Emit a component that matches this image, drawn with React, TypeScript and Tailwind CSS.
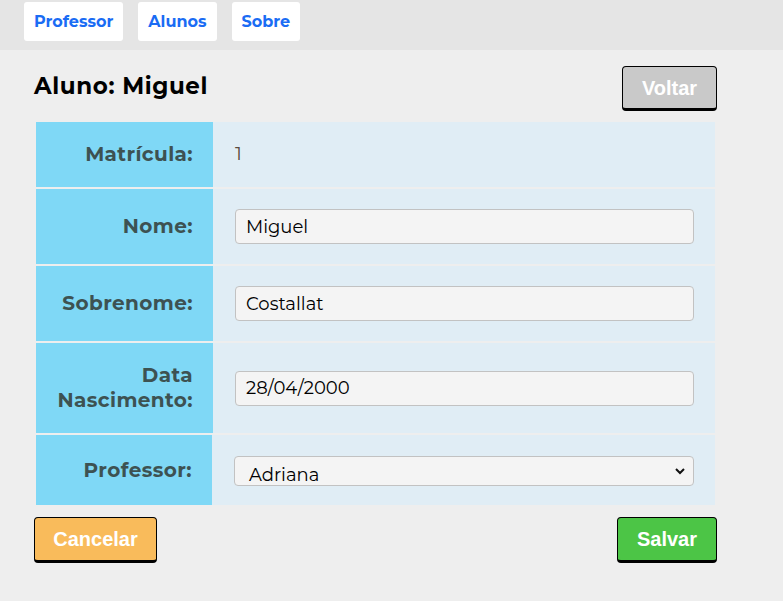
import React from "react";

const font = "font-['Montserrat','Inter',sans-serif]";
const btnFont = "font-['Liberation_Sans',Arial,sans-serif]";

const rows = [
  { label: "Matrícula:", h: "h-[65px]", kind: "text", value: "1" },
  { label: "Nome:", h: "h-[75px]", kind: "input", value: "Miguel" },
  { label: "Sobrenome:", h: "h-[75px]", kind: "input", value: "Costallat" },
  { label: "Data Nascimento:", h: "h-[90px]", kind: "input", value: "28/04/2000" },
  { label: "Professor:", h: "h-[70px]", kind: "select", value: "Adriana" },
];

const App = () => {
  return (
    <div className={`min-h-[601px] w-[783px] bg-[#eeeeee] ${font}`}>
      {/* nav */}
      <div className="flex h-[50px] items-start gap-[15px] bg-[#e5e5e5] pl-[24px] pt-[2px]">
        {["Professor", "Alunos", "Sobre"].map((item) => (
          <button
            key={item}
            className="flex h-[39px] items-center rounded-[3px] bg-white px-[10px] text-[16px] font-bold text-[#1a6cf4]"
          >
            {item}
          </button>
        ))}
      </div>

      <div className="w-[683px] pl-[34px] pt-[16px] box-content">
        <div className="flex h-[45px] items-start justify-between">
          <h2 className="mt-[4px] text-[23px] font-bold leading-[32px] tracking-[0.6px] text-black">
            Aluno: Miguel
          </h2>
          <button
            className={`h-[45px] w-[95px] rounded-[4px] border border-b-[3px] border-black bg-[#c9c9c9] text-[20px] font-bold text-white ${btnFont}`}
          >
            Voltar
          </button>
        </div>

        <div className="mt-[11px] ml-[2px] flex w-[679px] flex-col gap-[2px]">
          {rows.map((row) => (
            <div key={row.label} className={`flex ${row.h}`}>
              <div className="flex w-[177px] items-center justify-end bg-[#7fd8f6] pr-[20px] pl-[6px] text-right text-[20px] font-bold leading-[25px] tracking-[0.4px] text-[#3d5252]">
                <span className={row.label === "Data Nascimento:" ? "w-[150px]" : ""}>
                  {row.label}
                </span>
              </div>
              <div className="flex flex-1 items-center bg-[#e0edf5] pl-[22px] pr-[21px]">
                {row.kind === "text" && (
                  <span className="text-[19px] text-[#5b4a3e]">{row.value}</span>
                )}
                {row.kind === "input" && (
                  <input
                    readOnly
                    value={row.value}
                    className="h-[35px] w-full rounded-[4px] border border-[#c2c2c2] bg-[#f4f4f4] px-[10px] text-[18px] text-black outline-none"
                  />
                )}
                {row.kind === "select" && (
                  <div className="relative mt-[2px] h-[30px] w-[460px] overflow-hidden rounded-[4px] border border-[#c2c2c2] bg-[#f4f4f4]">
                    <span className="absolute left-[14px] top-[6px] text-[18px] leading-[24px] text-black">
                      {row.value}
                    </span>
                    <svg
                      className="absolute right-[8px] top-[10px]"
                      width="10"
                      height="8"
                      viewBox="0 0 10 8"
                    >
                      <path d="M1 2 L5 6 L9 2" stroke="#111" strokeWidth="2" fill="none" />
                    </svg>
                  </div>
                )}
              </div>
            </div>
          ))}
        </div>

        <div className="mt-[12px] flex justify-between">
          <button
            className={`h-[46px] w-[123px] rounded-[4px] border border-b-[3px] border-black bg-[#f9bb5b] text-[20px] font-bold text-white ${btnFont}`}
          >
            Cancelar
          </button>
          <button
            className={`h-[46px] w-[100px] rounded-[4px] border border-b-[3px] border-black bg-[#4cc546] text-[20px] font-bold text-white ${btnFont}`}
          >
            Salvar
          </button>
        </div>
      </div>
    </div>
  );
};

export default App;
